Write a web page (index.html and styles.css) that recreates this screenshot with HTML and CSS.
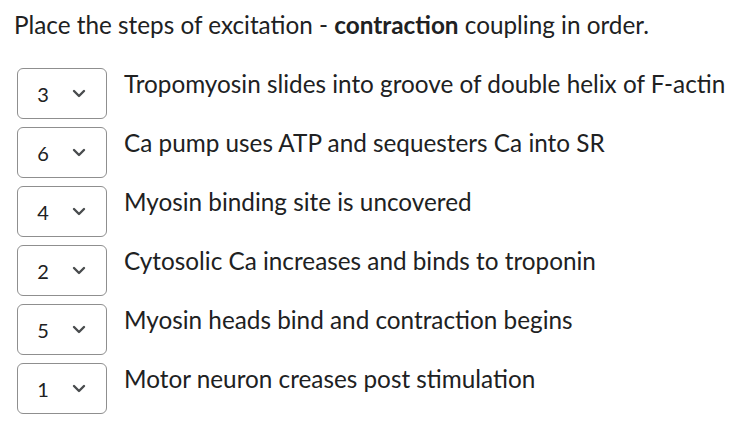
FILE: index.html
```html
<!DOCTYPE html>
<html lang="en">
<head>
    <meta charset="UTF-8">
    <meta name="viewport" content="width=device-width, initial-scale=1.0">
    <title>Ordering Question</title>
    <link rel="stylesheet" href="styles.css">
</head>
<body>
    <div class="question">
        <p class="prompt">Place the steps of excitation - <b>contraction</b> coupling in order.</p>
        <div class="steps">
            <div class="step">
                <div class="pick"><span class="num">3</span><svg class="chev" viewBox="0 0 14 9"><path d="M2 2 L7 7 L12 2"/></svg></div>
                <span class="label">Tropomyosin slides into groove of double helix of F-actin</span>
            </div>
            <div class="step">
                <div class="pick"><span class="num">6</span><svg class="chev" viewBox="0 0 14 9"><path d="M2 2 L7 7 L12 2"/></svg></div>
                <span class="label">Ca pump uses ATP and sequesters Ca into SR</span>
            </div>
            <div class="step">
                <div class="pick"><span class="num">4</span><svg class="chev" viewBox="0 0 14 9"><path d="M2 2 L7 7 L12 2"/></svg></div>
                <span class="label">Myosin binding site is uncovered</span>
            </div>
            <div class="step">
                <div class="pick"><span class="num">2</span><svg class="chev" viewBox="0 0 14 9"><path d="M2 2 L7 7 L12 2"/></svg></div>
                <span class="label">Cytosolic Ca increases and binds to troponin</span>
            </div>
            <div class="step">
                <div class="pick"><span class="num">5</span><svg class="chev" viewBox="0 0 14 9"><path d="M2 2 L7 7 L12 2"/></svg></div>
                <span class="label">Myosin heads bind and contraction begins</span>
            </div>
            <div class="step">
                <div class="pick"><span class="num">1</span><svg class="chev" viewBox="0 0 14 9"><path d="M2 2 L7 7 L12 2"/></svg></div>
                <span class="label">Motor neuron creases post stimulation</span>
            </div>
        </div>
    </div>
</body>
</html>
```

FILE: styles.css
```css
body {
    margin: 0;
    background: #fff;
    font-family: Lato, "Liberation Sans", sans-serif;
    color: #202122;
}
.question {
    padding: 9px 14px;
}
.prompt {
    margin: 0 0 27px;
    font-size: 24.3px;
    line-height: 32px;
}
.prompt b {
    font-weight: 700;
}
.steps {
    display: flex;
    flex-direction: column;
    gap: 8px;
    padding-left: 3px;
}
.step {
    display: flex;
    align-items: flex-start;
    gap: 17px;
}
.pick {
    box-sizing: border-box;
    width: 90px;
    height: 51px;
    border: 1px solid #8f8f8f;
    border-radius: 6px;
    display: flex;
    align-items: center;
    padding-left: 17px;
    gap: 21px;
    flex-shrink: 0;
}
.num {
    font-size: 20px;
    width: 16px;
    text-align: center;
}
.chev {
    width: 14px;
    height: 9px;
}
.chev path {
    fill: none;
    stroke: #494c4e;
    stroke-width: 2.4;
    stroke-linecap: round;
    stroke-linejoin: round;
}
.label {
    font-size: 24.3px;
    line-height: 32px;
}
```
